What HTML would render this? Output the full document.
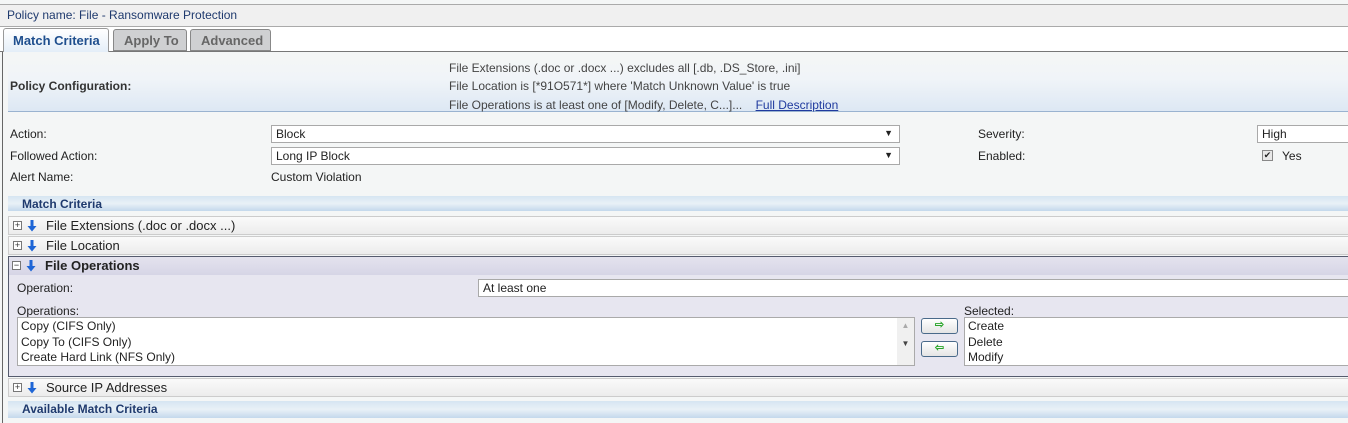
<!DOCTYPE html>
<html><head><style>
*{box-sizing:border-box;margin:0;padding:0}
body{width:1348px;height:423px;overflow:hidden;background:#f4f6f6;font-family:"Liberation Sans",Arial,sans-serif;font-size:12px;color:#222;position:relative}
.a{position:absolute;white-space:nowrap}
.sel{position:absolute;background:#fff;border:1px solid #a9a9a9;height:18px;padding:1px 4px;font-size:12px}
.sel .ar{position:absolute;right:6px;top:2px;font-size:9px}
.hdr{position:absolute;left:8px;width:1350px;height:15px;background:linear-gradient(#d6e5f2,#e9f1f7 50%,#c4d8ec);color:#1f3a6e;font-weight:bold;padding:1px 14px;font-size:12px}
.row{position:absolute;left:8px;width:1350px;height:19px;background:linear-gradient(#fafafa,#ececec);border:1px solid #ccc;font-size:13px;padding:1px 0 0 37px}
.pm{position:absolute;left:4px;top:4px;width:9px;height:9px;border:1px solid #777;background:#fff;font-size:9px;line-height:7px;text-align:center;color:#333}
.dn{position:absolute;left:18px;top:3px}
.btn{position:absolute;left:921px;width:37px;height:16px;border:1px solid #4a6a8a;border-radius:3px;background:linear-gradient(#fff,#e4e4e4);color:#2aa52a;font-size:11px;text-align:center;line-height:13px;font-weight:bold}
</style></head><body>
<div class="a" style="left:0;top:4px;width:1348px;height:23px;background:#f0f0f0;border-top:1px solid #aaa;border-bottom:1px solid #aaa"></div>
<div class="a" style="left:7px;top:8px;color:#1f3a6e;font-size:12px">Policy name: File - Ransomware Protection</div>
<div class="a" style="left:0;top:27px;width:1348px;height:25px;background:#fff"></div>
<div class="a" style="left:3px;top:28px;width:106px;height:24px;border:1px solid #999;border-bottom:none;border-radius:3px 3px 0 0;background:linear-gradient(#fff,#e4eef8);color:#1f4f8e;font-weight:bold;font-size:13px;padding:4px 0 0 9px;z-index:2">Match Criteria</div>
<div class="a" style="left:113px;top:29px;width:74px;height:22px;border:1px solid #888;border-radius:3px 3px 0 0;background:#cfd0d2;color:#666;font-weight:bold;font-size:13px;padding:3px 0 0 10px">Apply To</div>
<div class="a" style="left:190px;top:29px;width:81px;height:22px;border:1px solid #888;border-radius:3px 3px 0 0;background:#cfd0d2;color:#666;font-weight:bold;font-size:13px;padding:3px 0 0 10px">Advanced</div>
<div class="a" style="left:0;top:51px;width:1348px;height:1px;background:#777"></div>
<div class="a" style="left:2px;top:52px;width:1px;height:371px;background:#666"></div>
<div class="a" style="left:8px;top:58px;width:1340px;height:54px;background:linear-gradient(#f4f6f6,#f0f4f8 40%,#dde8f4);border-bottom:1px solid #9ab3d0"></div>
<div class="a" style="left:10px;top:79px;font-weight:bold;color:#333">Policy Configuration:</div>
<div class="a" style="left:449px;top:61px;color:#444">File Extensions (.doc or .docx ...) excludes all [.db, .DS_Store, .ini]</div>
<div class="a" style="left:449px;top:79px;color:#444">File Location is [*91O571*] where 'Match Unknown Value' is true</div>
<div class="a" style="left:449px;top:98px;color:#444">File Operations is at least one of [Modify, Delete, C...]...&nbsp;&nbsp;&nbsp; <span style="color:#1f3a9e;text-decoration:underline">Full Description</span></div>
<div class="a" style="left:10px;top:127px">Action:</div>
<div class="sel" style="left:271px;top:125px;width:629px">Block<span class="ar">▼</span></div>
<div class="a" style="left:10px;top:149px">Followed Action:</div>
<div class="sel" style="left:271px;top:147px;width:629px">Long IP Block<span class="ar">▼</span></div>
<div class="a" style="left:10px;top:170px">Alert Name:</div>
<div class="a" style="left:271px;top:170px">Custom Violation</div>
<div class="a" style="left:978px;top:127px">Severity:</div>
<div class="sel" style="left:1257px;top:125px;width:100px">High</div>
<div class="a" style="left:978px;top:149px">Enabled:</div>
<div class="a" style="left:1262px;top:150px;width:11px;height:11px;border:1px solid #888;background:#e8e8e8;font-size:9px;line-height:9px;text-align:center">✔</div>
<div class="a" style="left:1282px;top:149px">Yes</div>
<div class="hdr" style="top:196px">Match Criteria</div>
<div class="row" style="top:216px"><span class="pm">+</span><svg class="dn" width="10" height="12" viewBox="0 0 10 12"><path d="M3.5 0h3v6h3L5 11.5 0.5 6h3z" fill="#1f66d6"/></svg>File Extensions (.doc or .docx ...)</div>
<div class="row" style="top:236px"><span class="pm">+</span><svg class="dn" width="10" height="12" viewBox="0 0 10 12"><path d="M3.5 0h3v6h3L5 11.5 0.5 6h3z" fill="#1f66d6"/></svg>File Location</div>
<div class="a" style="left:8px;top:256px;width:1350px;height:121px;background:#e7e6f0;border:1px solid #555b6e"></div>
<div class="a" style="left:9px;top:257px;width:1339px;height:18px;background:linear-gradient(#e4e3ee,#d6d5e6)"></div>
<div class="a" style="left:12px;top:261px;width:9px;height:9px;border:1px solid #777;background:#fff;font-size:9px;line-height:6px;text-align:center">−</div>
<svg class="a" style="left:26px;top:260px" width="10" height="12" viewBox="0 0 10 12"><path d="M3.5 0h3v6h3L5 11.5 0.5 6h3z" fill="#1f66d6"/></svg>
<div class="a" style="left:45px;top:258px;font-weight:bold;font-size:13px">File Operations</div>
<div class="a" style="left:17px;top:281px">Operation:</div>
<div class="sel" style="left:478px;top:279px;width:880px">At least one</div>
<div class="a" style="left:17px;top:304px">Operations:</div>
<div class="a" style="left:17px;top:317px;width:898px;height:49px;background:#fff;border:1px solid #aaa;padding:1px 3px;line-height:15.5px">Copy (CIFS Only)<br>Copy To (CIFS Only)<br>Create Hard Link (NFS Only)</div>
<div class="a" style="left:897px;top:318px;width:17px;height:47px;background:#f0f0f0;font-size:8px;color:#aaa;text-align:center;padding-top:3px">▲<br><br><span style="color:#444">▼</span></div>
<div class="btn" style="top:318px">⇨</div>
<div class="btn" style="top:341px">⇦</div>
<div class="a" style="left:964px;top:304px">Selected:</div>
<div class="a" style="left:964px;top:317px;width:400px;height:49px;background:#fff;border:1px solid #aaa;padding:1px 3px;line-height:15.5px">Create<br>Delete<br>Modify</div>
<div class="row" style="top:378px"><span class="pm">+</span><svg class="dn" width="10" height="12" viewBox="0 0 10 12"><path d="M3.5 0h3v6h3L5 11.5 0.5 6h3z" fill="#1f66d6"/></svg>Source IP Addresses</div>
<div class="hdr" style="top:401px;height:17px;padding-top:1px">Available Match Criteria</div>
</body></html>
